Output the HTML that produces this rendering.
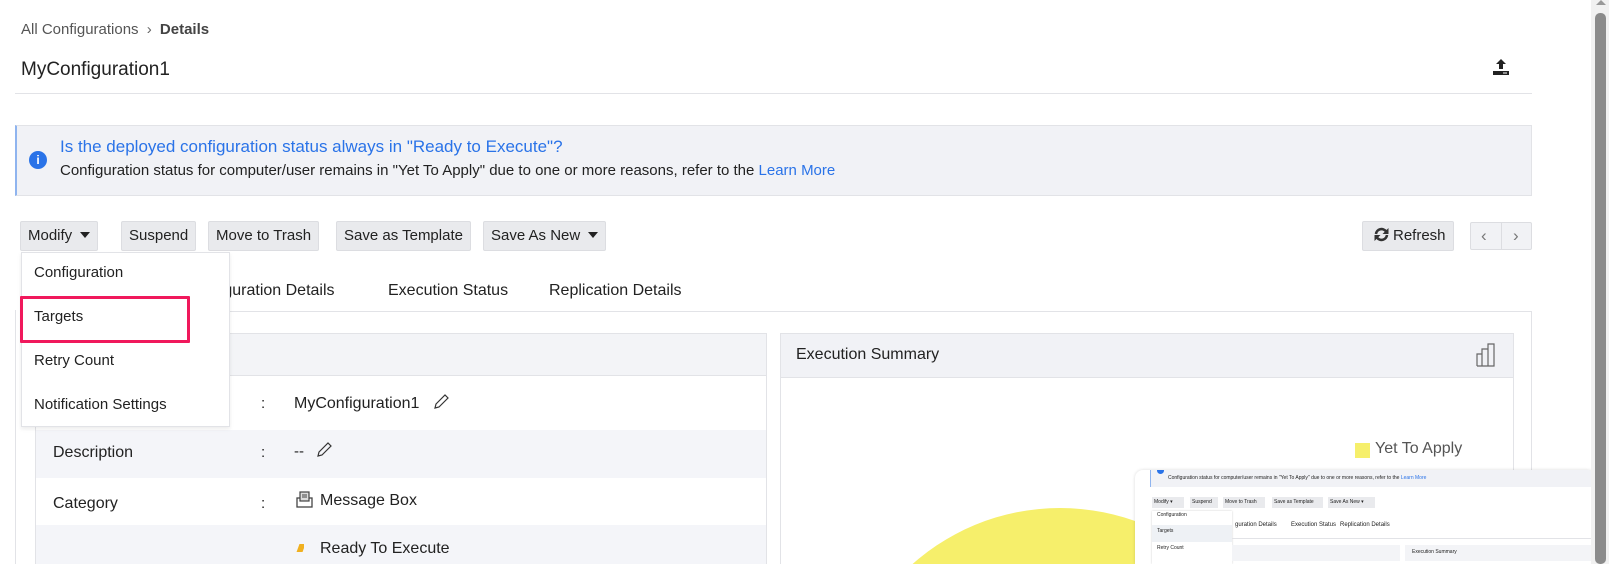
<!DOCTYPE html>
<html><head><meta charset="utf-8"><style>
*{box-sizing:border-box;margin:0;padding:0}
html,body{width:1609px;height:564px;overflow:hidden}
body{background:#fff;font-family:"Liberation Sans",sans-serif;color:#222;position:relative}
.a{position:absolute;white-space:nowrap}
.btn{position:absolute;top:221px;height:30px;background:#e9eaed;border:1px solid #dcdde1;border-radius:2px;font-size:15px;line-height:28px;padding:0 7px;color:#222}
.tri{display:inline-block;width:0;height:0;border-left:5px solid transparent;border-right:5px solid transparent;border-top:6px solid #222;margin-left:8px;vertical-align:2px}
.row{position:absolute;left:36px;width:730px;font-size:15px}
</style></head><body>
<div class="a" style="left:21px;top:21px;font-size:15px;color:#555">All Configurations <span style="color:#666;margin:0 4px">&#x203A;</span> <b style="color:#444">Details</b></div>
<div class="a" style="left:21px;top:59px;font-size:19px;color:#222">MyConfiguration1</div>
<svg class="a" style="left:1492px;top:58px" width="18" height="18" viewBox="0 0 18 18"><path d="M9 1 L4 6 H7 V11 H11 V6 H14 Z" fill="#222"/><rect x="1" y="13" width="16" height="4" fill="#222"/><rect x="11" y="14.5" width="4" height="1" fill="#fff"/></svg>
<div class="a" style="left:15px;top:93px;width:1517px;height:1px;background:#e2e3e7"></div>
<div class="a" style="left:15px;top:125px;width:1517px;height:71px;background:#f1f2f6;border:1px solid #e2e3e7;border-left:2px solid #8fb4ef"></div>
<div class="a" style="left:29px;top:151px;width:18px;height:18px;border-radius:50%;background:#2a73e8;color:#fff;font-size:12px;font-weight:bold;text-align:center;line-height:18px">i</div>
<div class="a" style="left:60px;top:137px;font-size:17px;color:#2a73e8">Is the deployed configuration status always in "Ready to Execute"?</div>
<div class="a" style="left:60px;top:162px;font-size:15px;color:#222">Configuration status for computer/user remains in "Yet To Apply" due to one or more reasons, refer to the <span style="color:#2a73e8">Learn More</span></div>
<div class="btn" style="left:20px">Modify<span class="tri"></span></div>
<div class="btn" style="left:121px">Suspend</div>
<div class="btn" style="left:208px">Move to Trash</div>
<div class="btn" style="left:336px">Save as Template</div>
<div class="btn" style="left:483px">Save As New<span class="tri"></span></div>
<div class="btn" style="left:1362px;padding-left:10px"><svg width="17" height="15" viewBox="0 0 17 15" style="vertical-align:-2px;margin-right:3px"><path d="M3 7 A5.5 5.5 0 0 1 13 4.5" stroke="#333" stroke-width="2.6" fill="none"/><path d="M15.5 1 V7 H9.5 Z" fill="#333"/><path d="M14 8 A5.5 5.5 0 0 1 4 10.5" stroke="#333" stroke-width="2.6" fill="none"/><path d="M1.5 14 V8 H7.5 Z" fill="#333"/></svg>Refresh</div>
<div class="a" style="left:1470px;top:222px;width:62px;height:28px;border:1px solid #dcdde1;border-radius:2px;background:#f1f2f5"><div class="a" style="left:30px;top:0;width:1px;height:26px;background:#dcdde1"></div><div class="a" style="left:10px;top:3px;font-size:17px;color:#777">&#x2039;</div><div class="a" style="left:42px;top:3px;font-size:17px;color:#777">&#x203A;</div></div>
<!-- tabs -->
<div class="a" style="left:15px;top:310px;width:1px;height:254px;background:#e2e3e7"></div>
<div class="a" style="left:230px;top:311px;width:1301px;height:1px;background:#e2e3e7"></div>
<div class="a" style="left:1531px;top:311px;width:1px;height:253px;background:#e2e3e7"></div>
<div class="a" style="left:186px;top:282px;font-size:16px">Configuration Details</div>
<div class="a" style="left:388px;top:282px;font-size:16px">Execution Status</div>
<div class="a" style="left:549px;top:282px;font-size:16px">Replication Details</div>
<!-- left box -->
<div class="a" style="left:35px;top:333px;width:732px;height:231px;border:1px solid #e2e3e7;border-bottom:none"></div>
<div class="row" style="top:334px;height:42px;background:#f3f4f7;border-bottom:1px solid #e2e3e7"></div>
<div class="row" style="top:430px;height:48px;background:#f4f5f9"></div>
<div class="row" style="top:525px;height:39px;background:#f4f5f9"></div>
<div class="a" style="left:261px;top:395px;font-size:15px">:</div>
<div class="a" style="left:294px;top:395px;font-size:16px">MyConfiguration1</div>
<svg class="a" style="left:432px;top:393px" width="18" height="18" viewBox="0 0 18 18"><path d="M3 15 L4 11 L13 2 L16 5 L7 14 Z" stroke="#333" stroke-width="1.2" fill="none"/></svg>
<div class="a" style="left:53px;top:444px;font-size:16px">Description</div>
<div class="a" style="left:261px;top:444px;font-size:15px">:</div>
<div class="a" style="left:294px;top:443px;font-size:15px">--</div>
<svg class="a" style="left:315px;top:441px" width="18" height="18" viewBox="0 0 18 18"><path d="M3 15 L4 11 L13 2 L16 5 L7 14 Z" stroke="#333" stroke-width="1.2" fill="none"/></svg>
<div class="a" style="left:53px;top:495px;font-size:16px">Category</div>
<div class="a" style="left:261px;top:495px;font-size:15px">:</div>
<svg class="a" style="left:296px;top:490px" width="18" height="18" viewBox="0 0 18 18"><rect x="1" y="8" width="15" height="9" fill="none" stroke="#444" stroke-width="1.3"/><rect x="4" y="2" width="9" height="9" fill="#ddd" stroke="#444" stroke-width="1.2"/><path d="M6 5h5M6 7h5" stroke="#444"/></svg>
<div class="a" style="left:320px;top:492px;font-size:16px">Message Box</div>
<div class="a" style="left:294px;top:544px;width:10px;height:20px;overflow:hidden"><div style="width:6px;height:8px;background:#f0b020;transform:skew(-20deg);margin:0 0 0 4px"></div></div>
<div class="a" style="left:320px;top:540px;font-size:16px">Ready To Execute</div>
<!-- right box -->
<div class="a" style="left:780px;top:333px;width:734px;height:231px;border:1px solid #e2e3e7;border-bottom:none;overflow:hidden">
 <div class="a" style="left:57px;top:174px;width:444px;height:444px;border-radius:50%;background:#f6ef6b"></div>
</div>
<div class="a" style="left:781px;top:334px;width:732px;height:44px;background:#f1f2f6;border-bottom:1px solid #e2e3e7"></div>
<div class="a" style="left:796px;top:346px;font-size:16px">Execution Summary</div>
<svg class="a" style="left:1476px;top:343px" width="20" height="24" viewBox="0 0 20 24"><path d="M1 23 V11 H6 V23 M6 23 V6 H12 V23 M12 23 V1 H18 V23 Z M1 23 H18" stroke="#666" stroke-width="1.2" fill="none"/></svg>
<div class="a" style="left:1355px;top:443px;width:15px;height:15px;background:#f6ef6b"></div>
<div class="a" style="left:1375px;top:440px;font-size:16px;color:#555">Yet To Apply</div>
<!-- thumbnail -->
<div class="a" style="left:1135px;top:470px;width:460px;height:94px;background:#fff;border-radius:8px 8px 0 0;overflow:hidden;box-shadow:0 0 3px rgba(0,0,0,.15)">
 <div class="a" style="left:15px;top:0;width:445px;height:17px;background:#f1f2f6;border-left:1px solid #8fb4ef"></div>
 <div class="a" style="left:22px;top:-3px;width:7px;height:7px;border-radius:50%;background:#2a73e8"></div>
 <div class="a" style="left:33px;top:5px;font-size:5px">Configuration status for computer/user remains in "Yet To Apply" due to one or more reasons, refer to the <span style="color:#2a73e8">Learn More</span></div>
 <div class="a" style="left:17px;top:27px;width:32px;height:11px;background:#e9eaed;font-size:5px;line-height:11px;padding-left:2px">Modify ▾</div>
 <div class="a" style="left:55px;top:27px;width:28px;height:11px;background:#e9eaed;font-size:5px;line-height:11px;padding-left:2px">Suspend</div>
 <div class="a" style="left:88px;top:27px;width:42px;height:11px;background:#e9eaed;font-size:5px;line-height:11px;padding-left:2px">Move to Trash</div>
 <div class="a" style="left:137px;top:27px;width:51px;height:11px;background:#e9eaed;font-size:5px;line-height:11px;padding-left:2px">Save as Template</div>
 <div class="a" style="left:193px;top:27px;width:47px;height:11px;background:#e9eaed;font-size:5px;line-height:11px;padding-left:2px">Save As New ▾</div>
 <div class="a" style="left:17px;top:41px;width:80px;height:53px;background:#fff;box-shadow:0 0 2px rgba(0,0,0,.2)"></div>
 <div class="a" style="left:17px;top:55px;width:80px;height:17px;background:#eef1f5"></div>
 <div class="a" style="left:22px;top:42px;font-size:5px">Configuration</div>
 <div class="a" style="left:22px;top:58px;font-size:5px">Targets</div>
 <div class="a" style="left:22px;top:75px;font-size:5px">Retry Count</div>
 <div class="a" style="left:100px;top:52px;font-size:6px">guration Details</div>
 <div class="a" style="left:156px;top:52px;font-size:6px">Execution Status</div>
 <div class="a" style="left:205px;top:52px;font-size:6px">Replication Details</div>
 <div class="a" style="left:97px;top:68px;width:363px;height:1px;background:#e2e3e7"></div>
 <div class="a" style="left:97px;top:75px;width:168px;height:16px;background:#f3f4f7"></div>
 <div class="a" style="left:270px;top:75px;width:190px;height:16px;background:#f3f4f7"></div>
 <div class="a" style="left:277px;top:79px;font-size:5px">Execution Summary</div>
</div>
<!-- dropdown -->
<div class="a" style="left:21px;top:252px;width:209px;height:175px;background:#fff;border:1px solid #e2e3e7;box-shadow:0 2px 4px rgba(0,0,0,.08)"></div>
<div class="a" style="left:34px;top:264px;font-size:15px">Configuration</div>
<div class="a" style="left:20px;top:296px;width:170px;height:47px;border:3px solid #f0185c;border-radius:1px"></div>
<div class="a" style="left:34px;top:308px;font-size:15px">Targets</div>
<div class="a" style="left:34px;top:352px;font-size:15px">Retry Count</div>
<div class="a" style="left:34px;top:396px;font-size:15px">Notification Settings</div>
<!-- scrollbar -->
<div class="a" style="left:1591px;top:0;width:18px;height:564px;background:#f1f1f1"></div>
<div class="a" style="left:1595px;top:13px;width:11px;height:551px;border-radius:5px;background:#8b8b8b"></div>
<div class="a" style="left:1596px;top:0;width:0;height:0;border-left:5px solid transparent;border-right:5px solid transparent;border-bottom:5px solid #999"></div>
</body></html>
